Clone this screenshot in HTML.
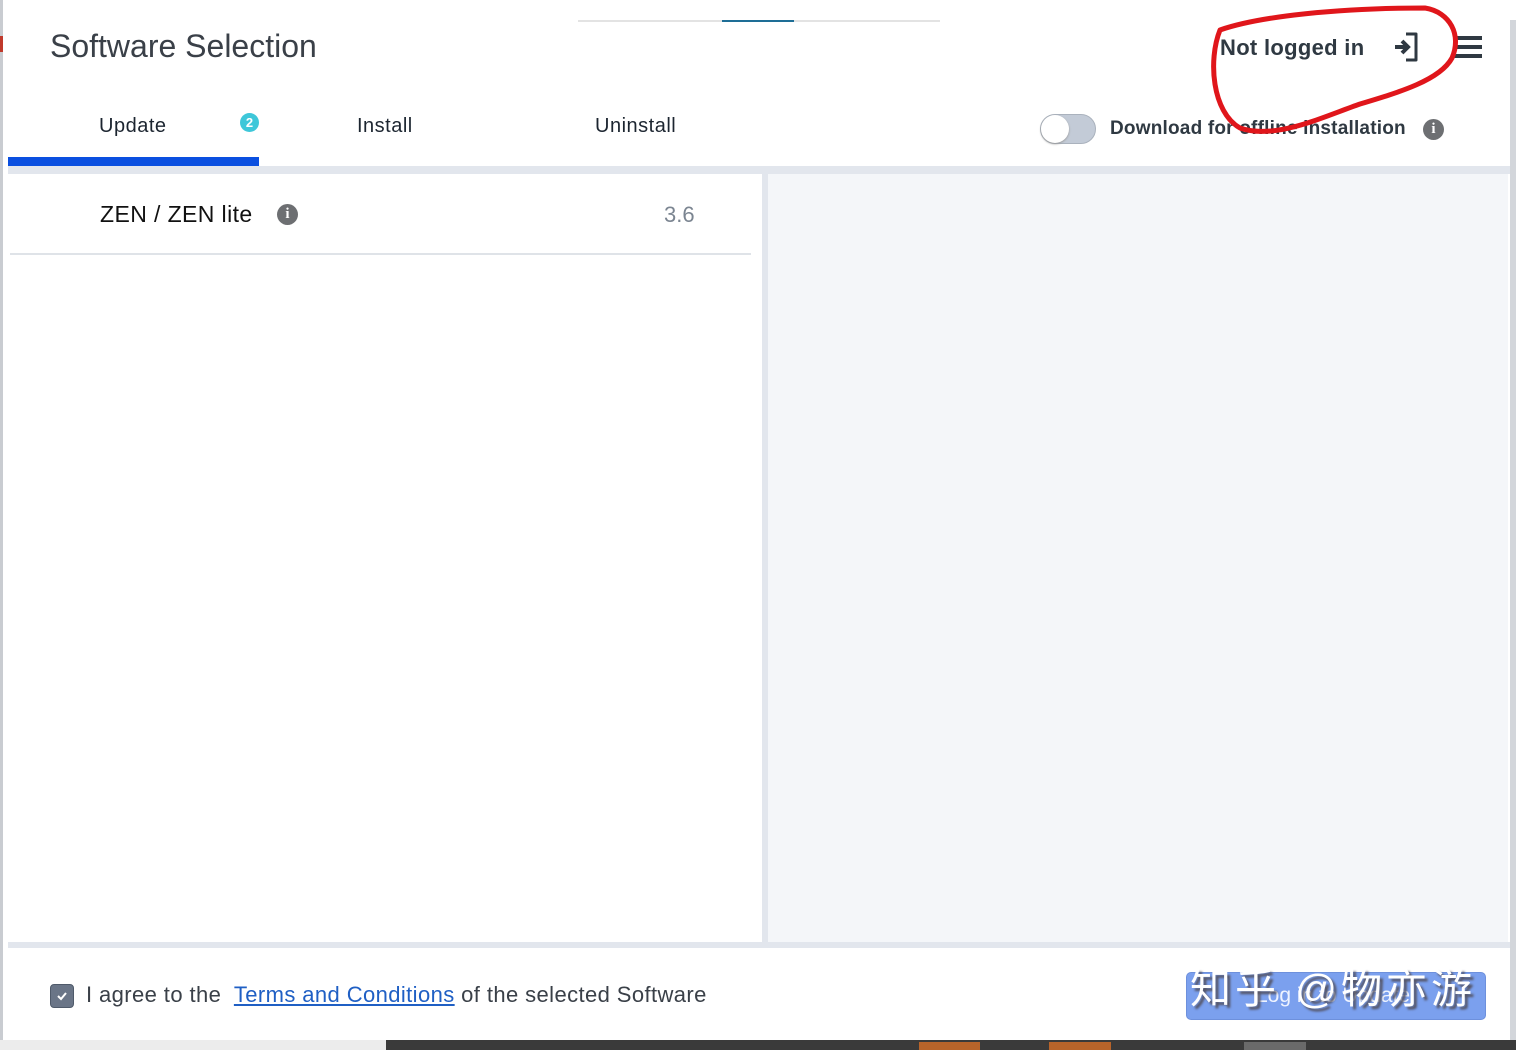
<!DOCTYPE html>
<html><head><meta charset="utf-8"><style>
*{margin:0;padding:0;box-sizing:border-box}
body{width:1516px;height:1050px;position:relative;overflow:hidden;background:#fff;font-family:"Liberation Sans","Noto Sans CJK SC",sans-serif;color:#1c2530}
.a{position:absolute;white-space:nowrap}
</style></head><body>
<div class="a" style="left:0;top:0;width:3px;height:1040px;background:#c9ccd1"></div>
<div class="a" style="left:0;top:36px;width:3px;height:16px;background:#c0392b"></div>
<div class="a" style="left:1510px;top:20px;width:6px;height:1020px;background:#d3d6db"></div>
<div class="a" style="left:578px;top:20px;width:362px;height:2px;background:#e3e3e3"></div>
<div class="a" style="left:722px;top:20px;width:72px;height:2px;background:#1e6e96"></div>
<div class="a" style="left:50px;top:28px;font-size:32px;color:#3a4048">Software Selection</div>
<div class="a" style="left:1220px;top:35px;font-size:22px;font-weight:bold;color:#2f3942;letter-spacing:0.3px">Not logged in</div>
<svg class="a" style="left:1392px;top:31px" width="34" height="34" viewBox="0 0 34 34"><path d="M14 3h10v26H14" fill="none" stroke="#2f3942" stroke-width="3" stroke-linejoin="round"/><path d="M3 16h11M10 10l6 6-6 6" fill="none" stroke="#2f3942" stroke-width="4"/></svg>
<div class="a" style="left:1454px;top:36px;width:28px;height:4px;background:#2f3942;box-shadow:0 9px 0 #2f3942,0 18px 0 #2f3942"></div>
<div class="a" style="left:99px;top:115px;font-size:20px;letter-spacing:0.5px">Update</div>
<div class="a" style="left:240px;top:113px;width:19px;height:19px;border-radius:50%;background:#3ec7d9;color:#fff;font-size:13px;font-weight:bold;text-align:center;line-height:19px">2</div>
<div class="a" style="left:357px;top:115px;font-size:20px;letter-spacing:0.5px">Install</div>
<div class="a" style="left:595px;top:115px;font-size:20px;letter-spacing:0.5px">Uninstall</div>
<div class="a" style="left:8px;top:157px;width:251px;height:9px;background:#0a4fe0"></div>
<div class="a" style="left:1040px;top:114px;width:56px;height:30px;border-radius:15px;background:#c3cbd7;border:1px solid #aab2bd"></div>
<div class="a" style="left:1041px;top:115px;width:28px;height:28px;border-radius:50%;background:#fff;box-shadow:0 1px 2px #999"></div>
<div class="a" style="left:1110px;top:118px;font-size:19px;font-weight:bold;color:#2f3942;letter-spacing:0.2px">Download for offline installation</div>
<div class="a" style="left:1423px;top:119px;width:21px;height:21px;border-radius:50%;background:#6d6f72;color:#fff;font-size:15px;font-weight:bold;text-align:center;line-height:21px;font-family:'Liberation Serif',serif">i</div>
<div class="a" style="left:8px;top:166px;width:1502px;height:8px;background:#e2e6ed"></div>
<div class="a" style="left:762px;top:166px;width:6px;height:780px;background:#e2e6ed"></div>
<div class="a" style="left:768px;top:174px;width:740px;height:768px;background:#f4f6f9"></div>
<div class="a" style="left:8px;top:942px;width:1502px;height:6px;background:#e2e6ed"></div>
<div class="a" style="left:100px;top:201px;font-size:23px;color:#111;letter-spacing:0.4px">ZEN / ZEN lite</div>
<div class="a" style="left:277px;top:204px;width:21px;height:21px;border-radius:50%;background:#6d6f72;color:#fff;font-size:15px;font-weight:bold;text-align:center;line-height:21px;font-family:'Liberation Serif',serif">i</div>
<div class="a" style="left:664px;top:202px;font-size:22px;color:#7b8591">3.6</div>
<div class="a" style="left:10px;top:253px;width:741px;height:2px;background:#dfe3e8"></div>
<div class="a" style="left:50px;top:984px;width:24px;height:24px;border-radius:4px;background:#6a7587;border:1px solid #4f5a6a"></div>
<svg class="a" style="left:55px;top:989px" width="14" height="14"><path d="M3 7l3 3 5-6" fill="none" stroke="#fff" stroke-width="2"/></svg>
<div class="a" style="left:86px;top:982px;font-size:22px;color:#3a4048;letter-spacing:0.4px">I agree to the&nbsp; <span style="color:#1f5fc4;text-decoration:underline">Terms and Conditions</span> of the selected Software</div>
<div class="a" style="left:1186px;top:972px;width:300px;height:48px;border-radius:5px;background:#7ba0ee;border:1px solid #6d90dc"></div>
<div class="a" style="left:1256px;top:984px;font-size:21px;color:#eef3ff">Log in to Update</div>
<div class="a" style="left:1190px;top:955px;font-size:41px;color:#fff;text-shadow:3px 3px 2px #556;letter-spacing:4px">知乎 @物亦游</div>
<div class="a" style="left:0;top:1040px;width:386px;height:10px;background:#ececec"></div>
<div class="a" style="left:386px;top:1040px;width:1130px;height:10px;background:#3a3a3a"></div>
<div class="a" style="left:919px;top:1042px;width:61px;height:8px;background:#b8642a"></div>
<div class="a" style="left:1049px;top:1042px;width:62px;height:8px;background:#b8642a"></div>
<div class="a" style="left:1244px;top:1042px;width:62px;height:8px;background:#6a6a6a"></div>
<svg class="a" style="left:0;top:0" width="1516" height="160"><path d="M1220 30C1260 16 1340 8 1425 8C1450 12 1462 35 1452 58C1440 80 1400 92 1360 104C1320 118 1275 140 1240 128C1212 112 1208 60 1220 30Z" fill="none" stroke="#e0161b" stroke-width="5" stroke-linejoin="round"/></svg>
</body></html>
